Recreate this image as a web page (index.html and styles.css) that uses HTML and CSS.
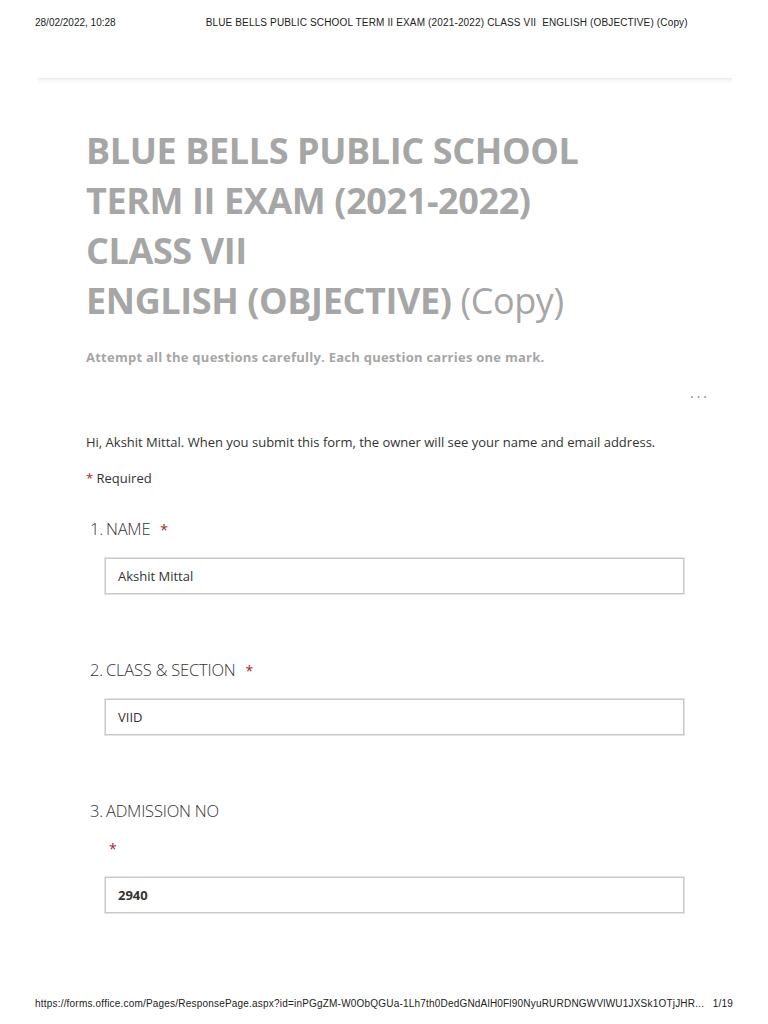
FILE: index.html
```html
<!DOCTYPE html>
<html lang="en">
<head>
    <meta charset="UTF-8">
    <meta name="viewport" content="width=device-width, initial-scale=1.0">
    <title>BLUE BELLS PUBLIC SCHOOL TERM II EXAM (2021-2022) CLASS VII ENGLISH (OBJECTIVE) (Copy)</title>
    <link rel="stylesheet" href="styles.css">
</head>
<body>
    <div class="page">
        <div class="print-header">
            <span class="print-date">28/02/2022, 10:28</span>
            <span class="print-title">BLUE BELLS PUBLIC SCHOOL TERM II EXAM (2021-2022) CLASS VII&nbsp; ENGLISH (OBJECTIVE) (Copy)</span>
        </div>

        <div class="form-card">
            <div class="form-head">
                <h1 class="form-title">BLUE BELLS PUBLIC SCHOOL<br>TERM II EXAM (2021-2022)<br>CLASS VII<br>ENGLISH (OBJECTIVE) <span class="copy">(Copy)</span></h1>
                <p class="form-desc">Attempt all the questions carefully. Each question carries one mark.</p>
            </div>

            <div class="more-row"><span class="more-dots">&middot;&middot;&middot;</span></div>

            <div class="form-body">
                <p class="notice">Hi, Akshit Mittal. When you submit this form, the owner will see your name and email address.</p>
                <p class="required-note"><span class="star">*</span> Required</p>

                <div class="question q-first">
                    <div class="q-title">1.<span class="q-text">NAME</span><span class="star">*</span></div>
                    <div class="answer">Akshit Mittal</div>
                </div>

                <div class="question">
                    <div class="q-title">2.<span class="q-text">CLASS &amp; SECTION</span><span class="star">*</span></div>
                    <div class="answer">VIID</div>
                </div>

                <div class="question">
                    <div class="q-title">3.<span class="q-text">ADMISSION NO</span></div>
                    <div class="q-star-line"><span class="star">*</span></div>
                    <div class="answer answer-bold">2940</div>
                </div>
            </div>
        </div>

        <div class="print-footer">
            <span class="print-url">https://forms.office.com/Pages/ResponsePage.aspx?id=inPGgZM-W0ObQGUa-1Lh7th0DedGNdAlH0Fl90NyuRURDNGWVlWU1JXSk1OTjJHR...</span>
            <span class="print-page">1/19</span>
        </div>
    </div>
</body>
</html>
```

FILE: styles.css
```css
/* Page */
body {
    margin: 0;
    padding: 0;
    background: white;
    font-family: "Open Sans", "Noto Sans", sans-serif;
    color: #333;
}

.page {
    width: 768px;
    height: 1024px;
    display: flex;
    flex-direction: column;
    overflow: hidden;
}

/* Print header / footer */
.print-header,
.print-footer {
    display: flex;
    font-family: "Liberation Sans", Arial, sans-serif;
    font-size: 10px;
    color: #222;
    padding: 0 35px;
}

.print-header {
    padding-top: 17px;
    height: 16px;
}

.print-title {
    margin-left: 90px;
    letter-spacing: 0.15px;
}

.print-footer {
    margin-top: auto;
    padding-bottom: 15px;
    justify-content: space-between;
    letter-spacing: 0.2px;
}

/* Form card - only a soft shadow along the top edge */
.form-card {
    margin: 45px 36px 0 38px;
    border-top: 1px solid #ededed;
    background: linear-gradient(to bottom, #f3f3f3 0, #fbfbfb 3px, white 6px);
    padding: 0 48px;
}

.form-head {
    padding-top: 47px;
}

.form-title {
    margin: 0;
    font-size: 36px;
    line-height: 50px;
    font-weight: 700;
    color: #a6a6a6;
    letter-spacing: -0.4px;
}

.copy {
    font-weight: 400;
}

.form-desc {
    margin: 22px 0 0;
    font-size: 13px;
    font-weight: 700;
    color: #a6a6a6;
    letter-spacing: 0.25px;
}

.more-row {
    display: flex;
    justify-content: flex-end;
    height: 24px;
    margin-right: -26px;
    margin-top: 21px;
}

.more-dots {
    color: #888;
    font-size: 14px;
    letter-spacing: 3px;
}

/* Body */
.form-body {
    padding-top: 22px;
}

.notice {
    margin: 0;
    font-size: 13px;
    color: #333;
}

.required-note {
    margin: 18px 0 0;
    font-size: 13px;
    color: #333;
}

.star {
    color: #a4262c;
}

.question {
    margin-top: 66px;
    padding-left: 4px;
}

.q-first {
    margin-top: 32px;
}

.q-title {
    font-size: 16.5px;
    line-height: 20px;
    font-weight: 300;
    color: #333;
    letter-spacing: -0.2px;
}

.q-text {
    margin-left: 3px;
}

.q-title .star {
    margin-left: 10px;
    font-size: 14px;
    font-weight: 400;
}

.answer {
    margin: 18px 0 0 15px;
    height: 34px;
    border: 1px solid #c8c8c8;
    box-shadow: 0 0 0 1px #e4e4e4;
    display: flex;
    align-items: center;
    padding-left: 12px;
    font-size: 13px;
    color: #333;
}

.answer-bold {
    font-weight: 700;
}

.q-star-line {
    margin: 18px 0 0 19px;
    font-size: 14px;
}

.q-star-line + .answer {
    margin-top: 19px;
}
```
